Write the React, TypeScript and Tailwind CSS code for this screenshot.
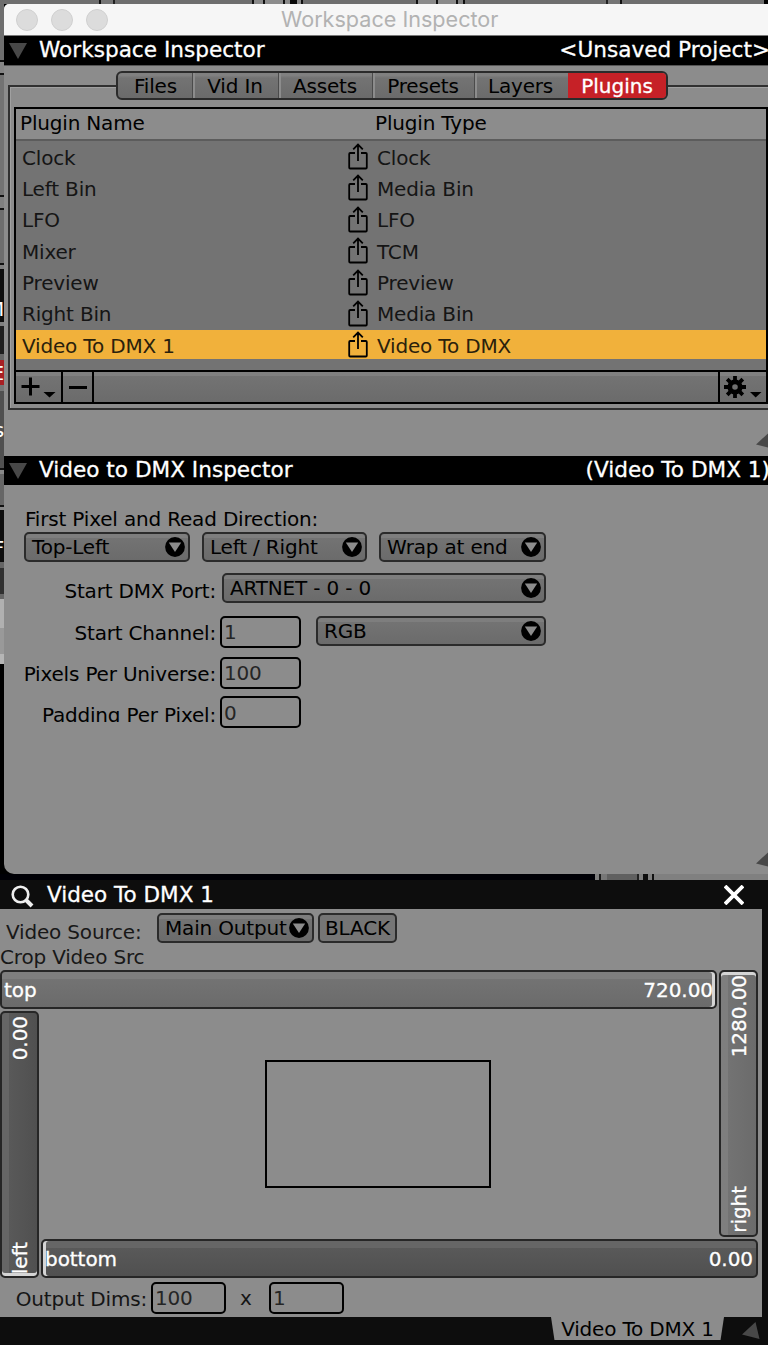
import type { ReactNode } from 'react'
import { clsx } from 'clsx'

type Segment = { size: number; color: string; text?: string }

const plugins = [
  { name: 'Clock', type: 'Clock' },
  { name: 'Left Bin', type: 'Media Bin' },
  { name: 'LFO', type: 'LFO' },
  { name: 'Mixer', type: 'TCM' },
  { name: 'Preview', type: 'Preview' },
  { name: 'Right Bin', type: 'Media Bin' },
  { name: 'Video To DMX 1', type: 'Video To DMX', selected: true }
]

const tabs = [
  { label: 'Files', width: 'w-[75px]' },
  { label: 'Vid In', width: 'w-[86px]' },
  { label: 'Assets', width: 'w-[94px]' },
  { label: 'Presets', width: 'w-[102px]' },
  { label: 'Layers', width: 'w-[93px]' },
  { label: 'Plugins', width: 'flex-1', active: true }
]

// slices of the main window that stay visible around the inspector
const topSlice: Segment[] = [
  { size: 99, color: '#6e6e6e' }, { size: 2, color: '#111' }, { size: 12, color: '#757575' }, { size: 2, color: '#222' },
  { size: 137, color: '#6e6e6e' }, { size: 2, color: '#111' }, { size: 9, color: '#8a8a8a' }, { size: 2, color: '#111' },
  { size: 18, color: '#8c8c8c' }, { size: 2, color: '#111' }, { size: 5, color: '#8a8a8a' }, { size: 7, color: '#080808' },
  { size: 4, color: '#8a8a8a' }, { size: 2, color: '#111' }, { size: 113, color: '#6e6e6e' }, { size: 2, color: '#111' },
  { size: 18, color: '#8a8a8a' }, { size: 2, color: '#111' }, { size: 18, color: '#8a8a8a' }, { size: 2, color: '#111' },
  { size: 5, color: '#808080' }, { size: 2, color: '#111' }, { size: 141, color: '#6e6e6e' }, { size: 2, color: '#222' },
  { size: 12, color: '#757575' }, { size: 2, color: '#111' }, { size: 142, color: '#6e6e6e' }
]

const leftSlice: Segment[] = [
  { size: 56, color: '#6e6e6e' }, { size: 2, color: '#111' }, { size: 11, color: '#858585' }, { size: 2, color: '#111' },
  { size: 120, color: '#737373' }, { size: 2, color: '#111' }, { size: 11, color: '#808080' }, { size: 2, color: '#111' },
  { size: 53, color: '#6e6e6e' }, { size: 2, color: '#111' }, { size: 4, color: '#808080' },
  { size: 26, color: '#0d0d0d' }, { size: 27, color: '#0d0d0d', text: 'M' },
  { size: 4, color: '#808080' }, { size: 28, color: '#1e1e1e' },
  { size: 6, color: '#666' }, { size: 25, color: '#a82024', text: 'E' }, { size: 6, color: '#777' },
  { size: 77, color: '#505050', text: 's' }, { size: 2, color: '#111' }, { size: 4, color: '#888' }, { size: 31, color: '#666' },
  { size: 2, color: '#111' }, { size: 3, color: '#888' },
  { size: 24, color: '#0d0d0d' }, { size: 28, color: '#0d0d0d', text: 'F' },
  { size: 6, color: '#666' }, { size: 26, color: '#303030' }, { size: 5, color: '#666' },
  { size: 29, color: '#b0b0b0' }, { size: 26, color: '#999' }, { size: 10, color: '#b5b5b5' }, { size: 222, color: '#000' }
]

const bottomSlice: Segment[] = [
  { size: 595, color: '#000006' }, { size: 4, color: '#808080' }, { size: 2, color: '#1a1a1a' }, { size: 6, color: '#777' },
  { size: 30, color: '#606060' }, { size: 2, color: '#222' }, { size: 4, color: '#808080' }, { size: 5, color: '#0d0d0d' },
  { size: 4, color: '#808080' }, { size: 2, color: '#111' }, { size: 114, color: '#808080' }
]

function Slice({ segments, vertical }: { segments: Segment[]; vertical?: boolean }) {
  return (
    <div className={clsx('flex shrink-0 overflow-hidden', vertical ? 'w-1 flex-col' : 'w-full')}>
      {segments.map((s, i) => (
        <div
          key={i}
          className="flex shrink-0 items-center justify-end overflow-hidden text-[20px] text-white"
          style={{ [vertical ? 'height' : 'width']: s.size, background: s.color }}
        >
          {s.text}
        </div>
      ))}
    </div>
  )
}

function ShareIcon() {
  return (
    <svg className="-mt-0.5 h-[27px] w-5 shrink-0" viewBox="0 0 20 27" fill="none" stroke="currentColor" strokeWidth="1.8">
      <path d="M7 10H2.200a1 1 0 0 0-1 1v13.500a1 1 0 0 0 1 1h15.600a1 1 0 0 0 1-1V11a1 1 0 0 0-1-1H13" />
      <path d="M10 18V2M5.200 6.300 10 1.500l4.800 4.800" />
    </svg>
  )
}

function DownIcon() {
  return (
    <svg className="h-5 w-5 shrink-0" viewBox="0 0 20 20">
      <circle cx="10" cy="10" r="9.900" fill="#000" />
      <path d="M3.800 5.500h12.400L10 15z" fill="#8c8c8c" />
    </svg>
  )
}

function Select({ label, className }: { label: string; className: string }) {
  return (
    <div
      className={clsx(
        'flex items-center justify-between rounded-[5px] border-2 border-[#2b2b2b] bg-linear-to-b from-[#7e7e7e] from-16% via-[#737373] via-16% to-[#6b6b6b] pr-[3px] pl-1.5 whitespace-nowrap',
        className
      )}
    >
      {label}
      <DownIcon />
    </div>
  )
}

function Field({ value, className }: { value: string; className: string }) {
  return (
    <div className={clsx('flex items-center rounded-[5px] border-2 border-black pl-0.5 text-[#252525]', className)}>
      {value}
    </div>
  )
}

function SectionHeader({ title, detail }: { title: string; detail: string }) {
  return (
    <div className="flex h-[29px] shrink-0 items-center bg-black pb-0.5 text-[21.600px] tracking-normal text-white [-webkit-text-stroke:0.3px_white]">
      <svg className="mt-0.5 ml-[5px] h-4 w-[18px]" viewBox="0 0 18 16">
        <path d="M0 0h18L9 16z" fill="#484848" />
      </svg>
      <span className="ml-3 flex-1">{title}</span>
      <span className="-mr-0.5 whitespace-nowrap">{detail}</span>
    </div>
  )
}

function ResizeCorner({ className }: { className: string }) {
  return (
    <svg className={clsx('h-[17px] w-[18px]', className)} viewBox="0 0 18 17">
      <path d="M0 12.500 13.500 0 17.500 17z" fill="#484848" />
    </svg>
  )
}

function Row({ label, className, children }: { label: string; className: string; children: ReactNode }) {
  return (
    <div className={clsx('flex', className)}>
      <span className="w-[212px] text-right whitespace-nowrap">{label}</span>
      {children}
    </div>
  )
}

function WorkspaceSection() {
  return (
    <section className="h-[391px] shrink-0 overflow-hidden border-t border-[#555]">
      <div className="relative z-10 mt-[5px] ml-28 flex h-[29px] w-[552px] overflow-hidden rounded-[6px] border-2 border-[#2b2b2b] bg-linear-to-b from-[#808080] from-10% via-[#737373] via-20% to-[#6b6b6b]">
        {tabs.map((tab, i) => (
          <div
            key={tab.label}
            className={clsx(
              'flex items-center justify-center',
              tab.width,
              tab.active && 'bg-[#c62127] tracking-normal text-white [-webkit-text-stroke:0.3px_white]',
              i > 0 && !tab.active && 'border-l-2 border-[#8c8c8c] pr-1 shadow-[-1px_0_0_#4b4b4b]'
            )}
          >
            {tab.label}
          </div>
        ))}
      </div>
      <div className="-mt-[15px] ml-1 h-[325px] w-[770px] border-2 border-[#303030] p-1 pt-[20px] shadow-[inset_1px_1px_0_#a0a0a0]">
        <div className="flex h-[297px] w-[754px] flex-col border-2 border-black bg-[#737373]">
          <div className="flex h-[32px] shrink-0 items-center border-b-2 border-[#5c5c5c] bg-[#8c8c8c] pb-0.5 pl-1">
            <span className="w-[355px]">Plugin Name</span>
            <span>Plugin Type</span>
          </div>
          <div className="flex-1 pt-px text-[#151515]">
            {plugins.map((p) => (
              <div key={p.name} className="h-[31.400px]">
                <div className={clsx('flex h-[29px] items-center pt-0.5 pl-1.5', p.selected && 'bg-[#f1b13b] text-[#2a210c]')}>
                  <span className="w-[326px]">{p.name}</span>
                  <span className="text-black">
                    <ShareIcon />
                  </span>
                  <span className="ml-[9px]">{p.type}</span>
                </div>
              </div>
            ))}
          </div>
          <div className="flex h-[32px] shrink-0 border-t-2 border-black bg-linear-to-b from-[#808080] from-14% via-[#737373] via-14% to-[#6b6b6b]">
            <svg className="h-[30px] w-[45px]" viewBox="0 0 45 30">
              <path d="M5.500 14.500h18M14.500 5.500v18" stroke="#000" strokeWidth="3" />
              <path d="M27.500 20h12L33.500 25.500z" />
            </svg>
            <div className="flex w-[33px] items-center justify-center border-x-2 border-black">
              <div className="h-[3px] w-[18px] bg-black" />
            </div>
            <div className="flex-1" />
            <svg className="h-[30px] w-[48px] border-l-2 border-black" viewBox="0 0 46 30">
              <circle cx="15" cy="15" r="5.200" fill="none" stroke="#000" strokeWidth="4.800" />
              <path
                d="M15 4v4M15 22v4M4 15h4M22 15h4M7.200 7.200l3 3M19.800 19.800l3 3M7.200 22.800l3-3M19.800 10.200l3-3"
                stroke="#000"
                strokeWidth="3.800"
              />
              <path d="M30 20h11.500L35.700 25.500z" />
            </svg>
          </div>
        </div>
      </div>
      <ResizeCorner className="mt-[22px] ml-[752px]" />
    </section>
  )
}

function DmxSection() {
  return (
    <section className="flex-1 overflow-hidden">
      <p className="mt-[20px] ml-[21px] leading-[28px]">First Pixel and Read Direction:</p>
      <div className="ml-5 flex">
        <Select label="Top-Left" className="-mt-px h-[30px] w-[166px]" />
        <Select label="Left / Right" className="-mt-px ml-3 h-[30px] w-[165px]" />
        <Select label="Wrap at end" className="-mt-px ml-3 h-[30px] w-[167px]" />
      </div>
      <Row label="Start DMX Port:" className="mt-[11px] h-[30px] leading-[37px]">
        <Select label="ARTNET - 0 - 0" className="ml-1.5 h-[30px] w-[324px] leading-none" />
      </Row>
      <Row label="Start Channel:" className="mt-[13px] h-[32px] leading-[34px]">
        <Field value="1" className="ml-1 w-[81px]" />
        <Select label="RGB" className="ml-[15px] h-[30px] w-[230px]" />
      </Row>
      <Row label="Pixels Per Universe:" className="mt-[9px] h-[32px] leading-[34px]">
        <Field value="100" className="ml-1 w-[81px]" />
      </Row>
      {/* the label box is too short here, so the descender gets cut */}
      <Row label="Padding Per Pixel:" className="mt-[7px] h-[32px] leading-[38px] [&>span]:h-[26px] [&>span]:overflow-hidden">
        <Field value="0" className="ml-1 w-[81px] pt-0.5 leading-none" />
      </Row>
      <ResizeCorner className="mt-[123px] ml-[752px]" />
    </section>
  )
}

function Slider({ label, value, vertical, className }: { label: string; value: string; vertical?: boolean; className: string }) {
  return (
    <div
      className={clsx(
        'flex items-center justify-between overflow-hidden rounded-[5px] border-2 border-[#262626] text-white [-webkit-text-stroke:0.3px_white]',
        vertical ? 'flex-col-reverse bg-linear-to-r' : 'bg-linear-to-b',
        className
      )}
    >
      <span className={clsx(vertical && 'rotate-180 [writing-mode:vertical-rl]')}>{label}</span>
      <span className={clsx(vertical && 'rotate-180 [writing-mode:vertical-rl]')}>{value}</span>
    </div>
  )
}

function VideoPanel() {
  return (
    <div className="flex h-[465px] flex-col bg-[#0d0d0d]">
      <div className="flex h-[29px] items-center text-[21.500px] tracking-normal text-white [-webkit-text-stroke:0.3px_white]">
        <svg className="mt-1 ml-[11px] h-[23px] w-[23px]" viewBox="0 0 23 23" fill="none" stroke="#eee">
          <circle cx="9.500" cy="9.500" r="7.800" strokeWidth="2.600" />
          <path d="m15 15 6 6" strokeWidth="4" />
        </svg>
        <span className="mt-px ml-[13px] flex-1">Video To DMX 1</span>
        <svg className="mr-6 h-5 w-5" viewBox="0 0 20 20" stroke="#fff" strokeWidth="3.800">
          <path d="m1 1 18 18M19 1 1 19" />
        </svg>
      </div>
      <div className="h-[408px] w-[762px] bg-[#8c8c8c]">
        <div className="flex h-[61px]">
          <div className="w-[157px] whitespace-nowrap text-[#181818]">
            <p className="mt-[11px] ml-1.5 leading-6">Video Source:</p>
            <p className="leading-[27px]">Crop Video Src</p>
          </div>
          <Select label="Main Output" className="mt-1 h-[30px] w-[157px]" />
          <div className="mt-1 ml-1 flex h-[30px] w-[79px] items-center justify-center rounded-[5px] border-2 border-[#2b2b2b] bg-[#757575]">
            BLACK
          </div>
        </div>
        <div className="grid grid-cols-[39px_676px_39px] grid-rows-[39px_226px_39px] gap-0.5 tracking-[-0.05px]">
          <Slider
            label="top"
            value="720.00"
            className="col-span-2 from-[#7e7e7e] from-20% via-[#737373] via-20% to-[#6b6b6b] pr-0.5 pl-0.5 shadow-[inset_-3px_0_0_#d5d5d5]"
          />
          <Slider
            label="right"
            value="1280.00"
            vertical
            className="row-span-2 from-[#7e7e7e] from-20% via-[#737373] via-20% to-[#6b6b6b] pt-[3px] pb-0.5 shadow-[inset_0_3px_0_#d5d5d5]"
          />
          <Slider
            label="left"
            value="0.00"
            vertical
            className="row-span-2 from-[#666] from-20% via-[#595959] via-20% to-[#505050] pt-[3px] pb-0.5 shadow-[inset_0_-3px_0_#d5d5d5]"
          />
          <div className="mt-[49px] ml-[224px] h-[128px] w-[226px] border-2 border-black" />
          <Slider
            label="bottom"
            value="0.00"
            className="col-span-2 from-[#666] from-20% via-[#595959] via-20% to-[#505050] pr-[3px] pl-0.5 shadow-[inset_3px_0_0_#d5d5d5]"
          />
        </div>
        <div className="mt-1 flex h-8 items-center">
          <span className="w-[147px] pt-0.5 text-right whitespace-nowrap text-[#151515]">Output Dims:</span>
          <Field value="100" className="ml-1 h-[32px] w-[75px]" />
          <span className="w-[43px] pl-[14px] text-[#151515]">x</span>
          <Field value="1" className="h-[32px] w-[75px]" />
        </div>
      </div>
      <div className="flex">
        <div className="ml-[551px] flex h-[23px] w-[173px] items-center justify-center bg-[#8c8c8c] whitespace-nowrap [clip-path:polygon(0_0,100%_0,98%_100%,2%_100%)]">
          Video To DMX 1
        </div>
        <ResizeCorner className="mt-[5px] ml-[18px]" />
      </div>
    </div>
  )
}

export default function App() {
  return (
    <div className="h-[1345px] w-[768px] overflow-hidden bg-black font-['DejaVu_Sans',sans-serif] text-[20px] leading-none tracking-[-0.18px] text-black">
      <div className="flex h-1">
        <Slice segments={topSlice} />
      </div>
      <div className="flex h-[870px] bg-black">
        <Slice segments={leftSlice} vertical />
        <div className="flex w-[764px] flex-col overflow-hidden rounded-l-[10px] rounded-tl-[5px] bg-[#8c8c8c]">
          <div className="flex h-8 shrink-0 items-center border-b border-[#777] bg-[#f6f6f6]">
            {[0, 1, 2].map((n) => (
              <div key={n} className="ml-3 mr-px h-[22px] w-[22px] rounded-full border border-[#cfcfcf] bg-[#dcdcdc]" />
            ))}
            <span className="ml-[172px] font-[Inter,sans-serif] text-[21.600px] tracking-normal text-[#b2b2b2]">
              Workspace Inspector
            </span>
          </div>
          <SectionHeader title="Workspace Inspector" detail="<Unsaved Project>" />
          <WorkspaceSection />
          <SectionHeader title="Video to DMX Inspector" detail="(Video To DMX 1)" />
          <DmxSection />
        </div>
      </div>
      <div className="flex h-1.5">
        <Slice segments={bottomSlice} />
      </div>
      <VideoPanel />
    </div>
  )
}
